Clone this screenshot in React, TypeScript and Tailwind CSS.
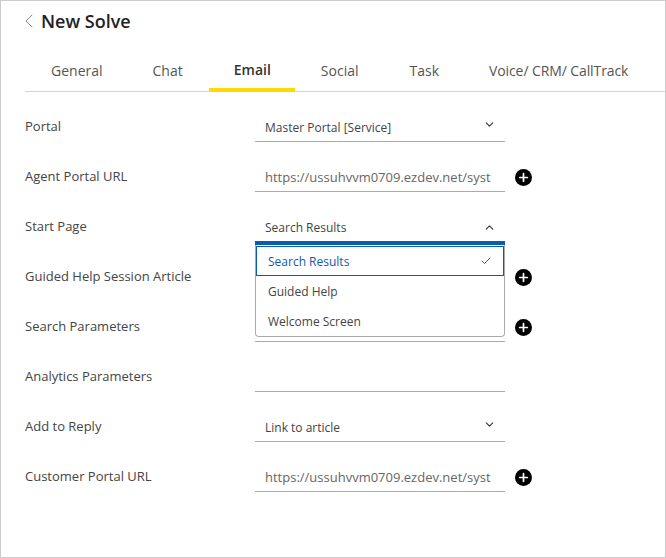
import { ChevronDown, ChevronLeft, ChevronUp, Check, Plus } from 'lucide-react'

const tabs = [
  { name: 'General', cls: 'px-[25px]' },
  { name: 'Chat', cls: 'pl-[25px] pr-[26px]' },
  { name: 'Email', cls: 'pl-[25px] pr-[24px]' },
  { name: 'Social', cls: 'pl-[26px] pr-[26px]' },
  { name: 'Task', cls: 'px-[25px]' },
  { name: 'Voice/ CRM/ CallTrack', cls: 'px-[25px] tracking-[-0.1px]' },
]

function AddButton() {
  return (
    <span className="ml-[10px] mt-[13px] flex h-[17px] w-[17px] items-center justify-center rounded-full bg-black">
      <Plus className="h-[13px] w-[13px] text-white" strokeWidth={3.2} />
    </span>
  )
}

function Row({ label, value, kind, open }: { label: string; value?: string; kind?: 'select' | 'url'; open?: boolean }) {
  return (
    <div className="flex h-[50px] items-start">
      <div className="w-[230px] pt-[10px] leading-[20px] text-[#444]">{label}</div>
      <div
        className={
          open
            ? 'relative z-10 flex h-[39px] w-[250px] items-start justify-between border-b-[4px] border-[#0a5cad] pl-[10px] pr-[9px] pt-[11px]'
            : 'flex h-[36px] w-[250px] items-start justify-between border-b border-[#aaa] pl-[10px] pr-[9px] pt-[11px]'
        }
      >
        <span className={kind === 'url' ? 'leading-[20px] text-[#666]' : 'mt-[1px] text-[12px] leading-[20px] text-[#444]'}>{value}</span>
        {kind === 'select' && !open && <ChevronDown className="mt-[1px] h-[13px] w-[13px] text-[#333]" strokeWidth={2} />}
        {open && <ChevronUp className="mt-[4px] h-[13px] w-[13px] text-[#333]" strokeWidth={2} />}
      </div>
      {kind === 'url' && <AddButton />}
    </div>
  )
}

export default function App() {
  return (
    <div className="relative h-[558px] w-[666px] overflow-hidden border border-[#ccc] bg-white text-[13px] font-['Open_Sans',sans-serif]">
      <div className="flex h-[44px] items-center pb-[5px] pl-[16px]">
        <ChevronLeft className="h-[24px] w-[24px] text-[#888]" strokeWidth={1} />
        <h1 className="text-[18px] font-semibold leading-[24px] text-[#222]">New Solve</h1>
      </div>

      <div className="ml-[24px] flex h-[47px] border-b border-[#d4d4d4] pl-[1px]">
        {tabs.map((tab) =>
          tab.name === 'Email' ? (
            <div key={tab.name} className={`-mb-px h-[47px] border-b-[4px] border-[#ffd900] pt-[15px] text-[14px] font-semibold leading-[20px] text-[#333] ${tab.cls}`}>
              {tab.name}
            </div>
          ) : (
            <div key={tab.name} className={`pt-[16px] text-[14px] leading-[20px] text-[#555] ${tab.cls}`}>
              {tab.name}
            </div>
          ),
        )}
      </div>

      <div className="px-[24px] pt-[14px]">
        <Row label="Portal" value="Master Portal [Service]" kind="select" />
        <Row label="Agent Portal URL" value="https://ussuhvvm0709.ezdev.net/syst" kind="url" />
        <Row label="Start Page" value="Search Results" kind="select" open />
        <Row label="Guided Help Session Article" kind="url" />
        <Row label="Search Parameters" kind="url" />
        <Row label="Analytics Parameters" />
        <Row label="Add to Reply" value="Link to article" kind="select" />
        <Row label="Customer Portal URL" value="https://ussuhvvm0709.ezdev.net/syst" kind="url" />
      </div>

      <div className="absolute left-[254px] top-[244px] z-20 h-[92px] w-[250px] rounded-b-[4px] border border-t-0 border-[#aaa] bg-white pt-[1px] text-[12px]">
        <div className="flex h-[30px] items-center justify-between border border-[#0a5cad] pl-[11px] pr-[11px] pt-[2px] text-[#0a5cad]">
          <span>Search Results</span>
          <Check className="-mt-[2px] h-[12px] w-[12px] text-[#1a66b5]" strokeWidth={2} />
        </div>
        <div className="flex h-[30px] items-center pl-[12px] pt-[2px] text-[#444]">Guided Help</div>
        <div className="flex h-[30px] items-center pl-[12px] pt-[2px] text-[#444]">Welcome Screen</div>
      </div>
    </div>
  )
}
